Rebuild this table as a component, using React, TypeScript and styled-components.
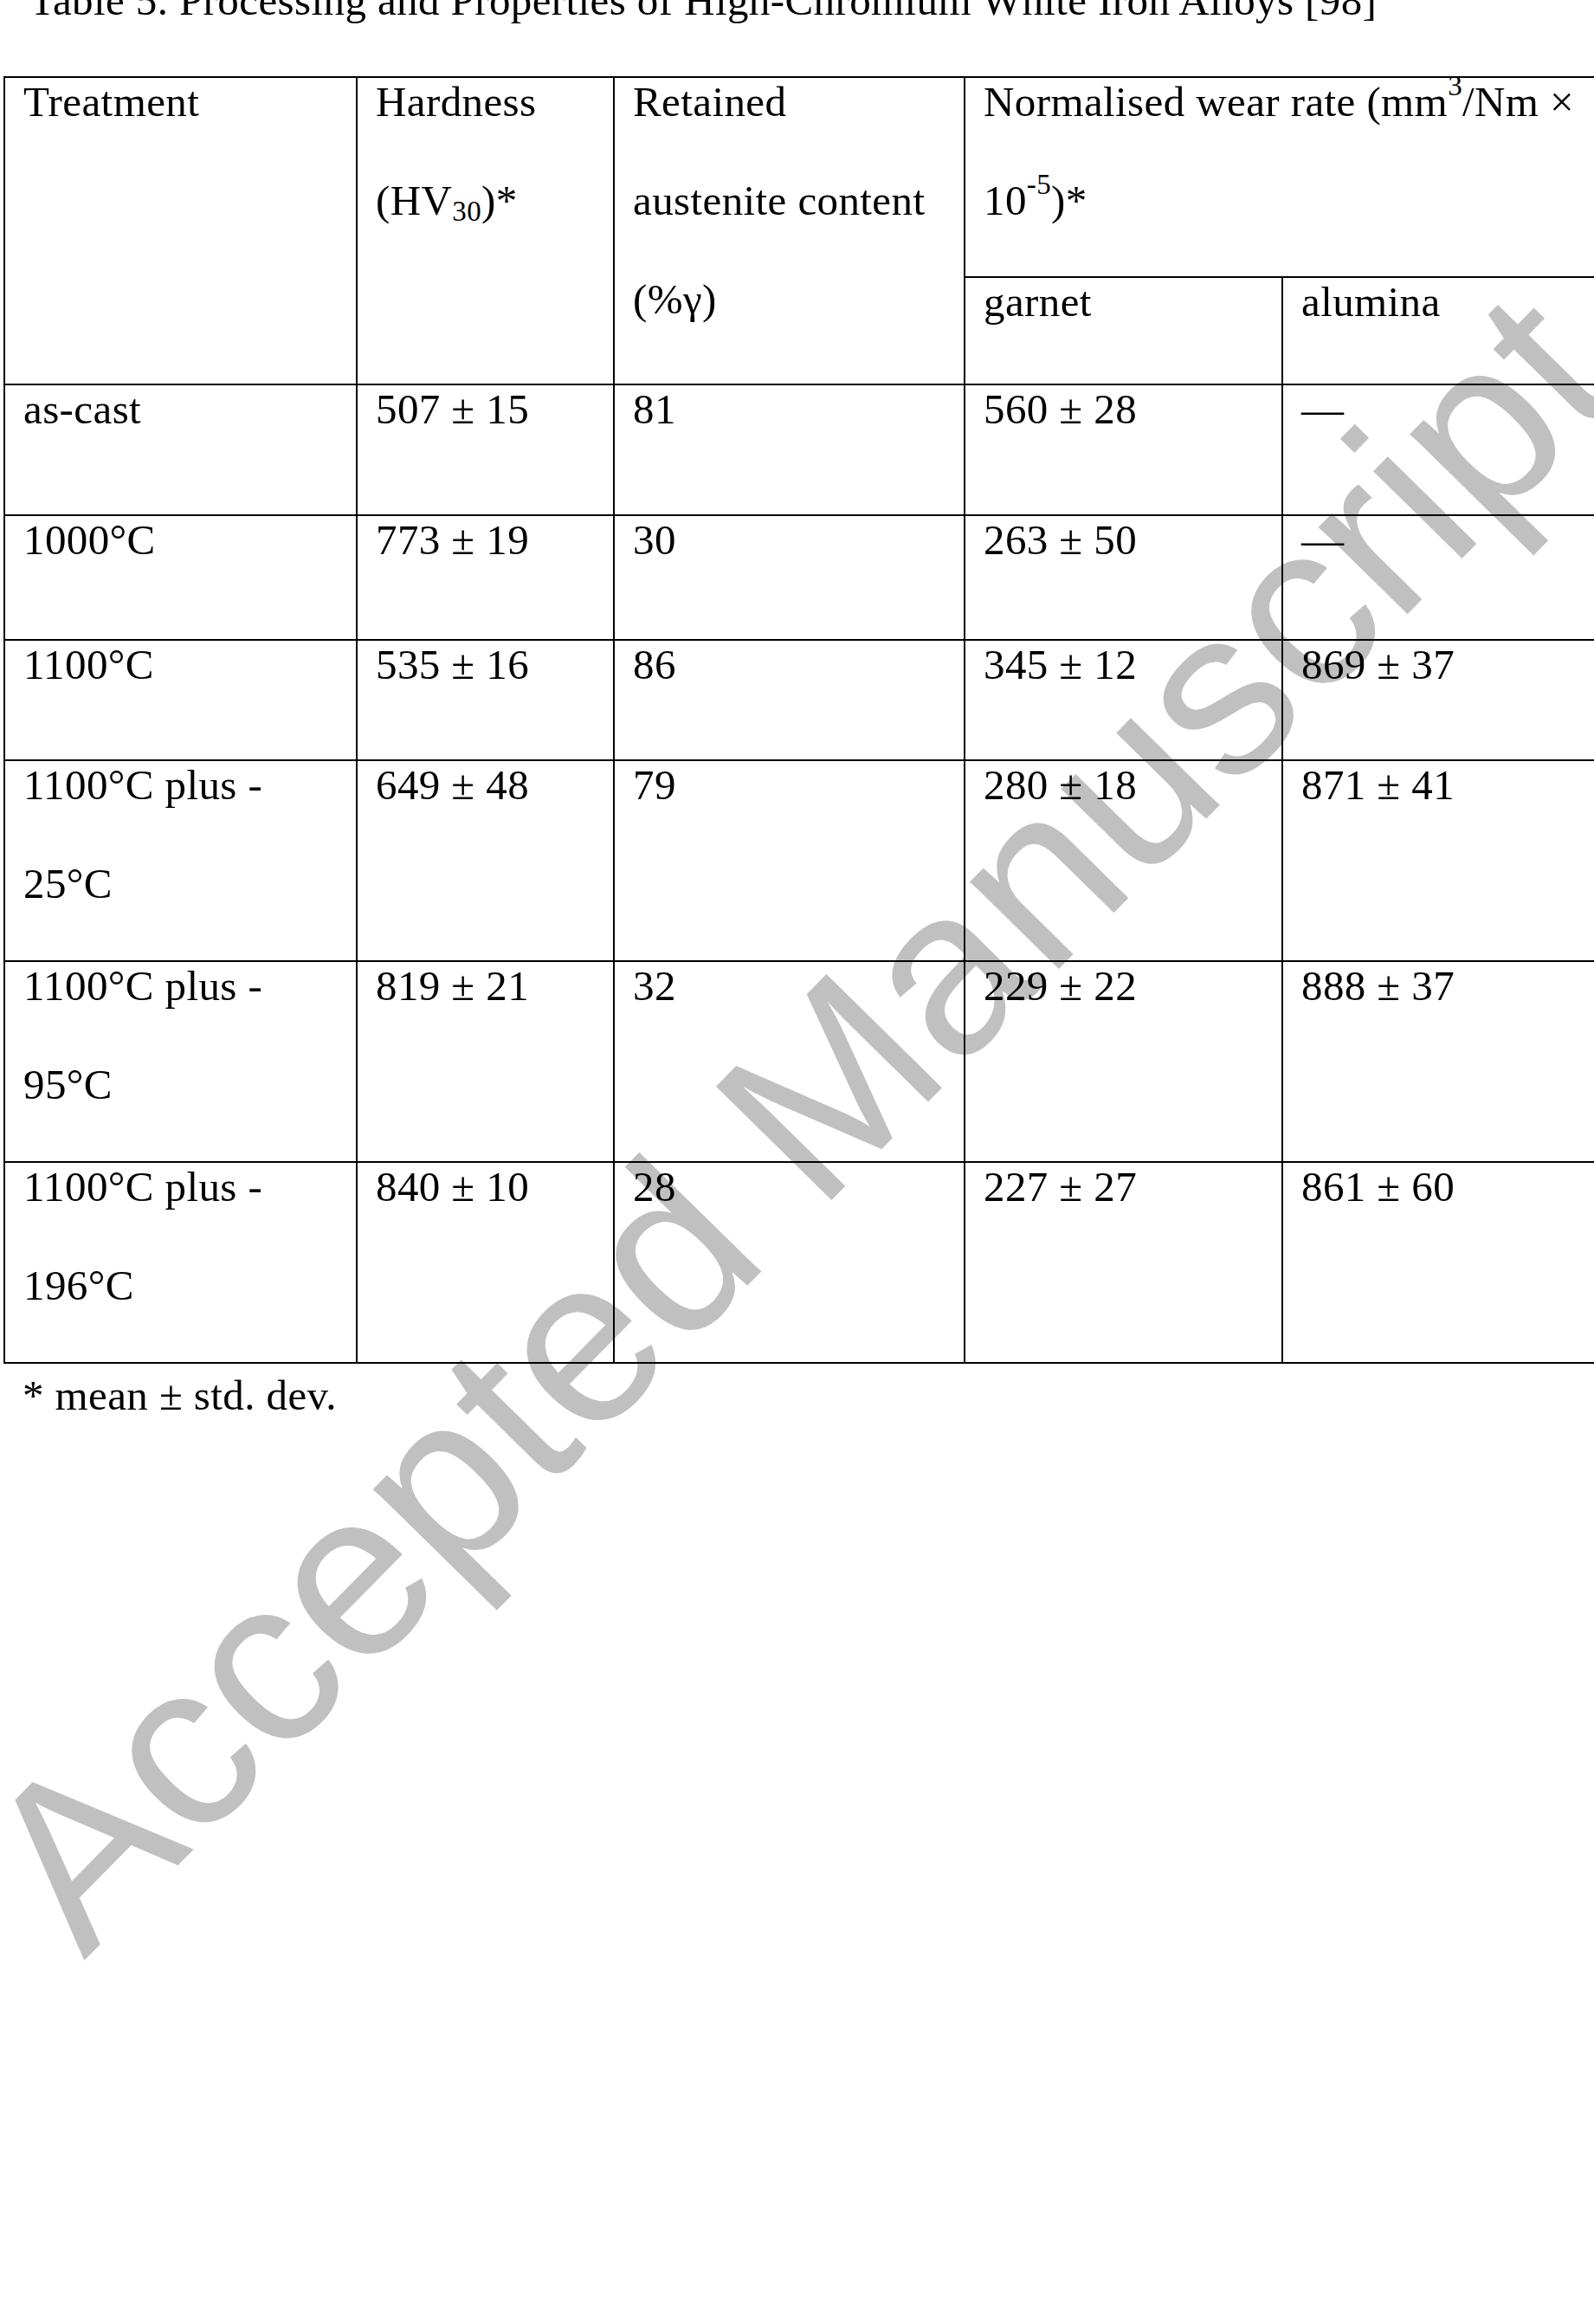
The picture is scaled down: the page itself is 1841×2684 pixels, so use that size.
import React, { ReactElement } from 'react';
import styled, { createGlobalStyle } from 'styled-components';

const GlobalStyle = createGlobalStyle`
  html, body {
    margin: 0;
    padding: 0;
    background: #ffffff;
    overflow: hidden;
  }
`;

const Page = styled.div`
  position: relative;
  width: 1841px;
  height: 2684px;
  overflow: hidden;
  background: #ffffff;
  font-family: "Liberation Serif", "Times New Roman", serif;
  font-size: 49px;
  letter-spacing: 0.4px;
  color: #000000;
`;

// big grey stamp across the page, sits under the table
const Watermark = styled.div`
  position: absolute;
  left: 920px;
  top: 1293px;
  z-index: 0;
  transform: translate(-50%, -50%) rotate(-45.5deg);
  font-family: "Liberation Sans", Arial, sans-serif;
  font-size: 272px;
  letter-spacing: 0;
  line-height: 1;
  white-space: nowrap;
  color: #c0c0c0;
  pointer-events: none;
`;

const Content = styled.div`
  position: relative;
  z-index: 1;
`;

const Caption = styled.div`
  margin-top: -27px;
  padding-left: 34px;
  line-height: 55px;
  white-space: nowrap;
`;

const Table = styled.table`
  margin: 60px 0 0 4px;
  width: 1898px;
  table-layout: fixed;
  border-collapse: separate;
  border-spacing: 0;
  border-top: 2px solid #000;
  border-left: 2px solid #000;
`;

const Row = styled.tr<{ $h: number }>`
  height: ${(p) => p.$h}px;
`;

const Cell = styled.td`
  box-sizing: border-box;
  padding: 0 0 0 21px;
  vertical-align: top;
  border-right: 2px solid #000;
  border-bottom: 2px solid #000;
  white-space: nowrap;
  overflow: visible;
`;

const Line = styled.span`
  display: block;
  line-height: 55px;

  & + & {
    margin-top: 59px;
  }
`;

const Sup = styled.span`
  position: relative;
  top: -24px;
  font-size: 33px;
  line-height: 0;
`;

const Sub = styled.span`
  position: relative;
  top: 7px;
  font-size: 33px;
  line-height: 0;
`;

const Note = styled.div`
  margin-top: 9px;
  padding-left: 26px;
  line-height: 55px;
`;

const widths = [407, 297, 405, 367, 420];

type DataRow = { treatment: string[]; hardness: string; austenite: string; garnet: string; alumina: string; h: number };

const rows: DataRow[] = [
  { treatment: ['as-cast'], hardness: '507 ± 15', austenite: '81', garnet: '560 ± 28', alumina: '—', h: 151 },
  { treatment: ['1000°C'], hardness: '773 ± 19', austenite: '30', garnet: '263 ± 50', alumina: '—', h: 144 },
  { treatment: ['1100°C'], hardness: '535 ± 16', austenite: '86', garnet: '345 ± 12', alumina: '869 ± 37', h: 139 },
  { treatment: ['1100°C plus -', '25°C'], hardness: '649 ± 48', austenite: '79', garnet: '280 ± 18', alumina: '871 ± 41', h: 232 },
  { treatment: ['1100°C plus -', '95°C'], hardness: '819 ± 21', austenite: '32', garnet: '229 ± 22', alumina: '888 ± 37', h: 232 },
  { treatment: ['1100°C plus -', '196°C'], hardness: '840 ± 10', austenite: '28', garnet: '227 ± 27', alumina: '861 ± 60', h: 232 },
];

export default function App(): ReactElement {
  return (
    <Page>
      <GlobalStyle />
      <Watermark>Accepted Manuscript</Watermark>
      <Content>
        <Caption>Table 5. Processing and Properties of High-Chromium White Iron Alloys [98]</Caption>
        <Table>
          <colgroup>
            {widths.map((w, i) => (
              <col key={i} style={{ width: w }} />
            ))}
          </colgroup>
          <tbody>
            <Row $h={231}>
              <Cell rowSpan={2}>
                <Line>Treatment</Line>
              </Cell>
              <Cell rowSpan={2}>
                <Line>Hardness</Line>
                <Line>
                  (HV<Sub>30</Sub>)*
                </Line>
              </Cell>
              <Cell rowSpan={2}>
                <Line>Retained</Line>
                <Line>austenite content</Line>
                <Line>(%γ)</Line>
              </Cell>
              <Cell colSpan={2}>
                <Line>
                  Normalised wear rate (mm<Sup>3</Sup>/Nm ×
                </Line>
                <Line>
                  10<Sup>-5</Sup>)*
                </Line>
              </Cell>
            </Row>
            <Row $h={124}>
              <Cell>
                <Line>garnet</Line>
              </Cell>
              <Cell>
                <Line>alumina</Line>
              </Cell>
            </Row>
            {rows.map((r, i) => (
              <Row key={i} $h={r.h}>
                <Cell>
                  {r.treatment.map((t, j) => (
                    <Line key={j}>{t}</Line>
                  ))}
                </Cell>
                <Cell>
                  <Line>{r.hardness}</Line>
                </Cell>
                <Cell>
                  <Line>{r.austenite}</Line>
                </Cell>
                <Cell>
                  <Line>{r.garnet}</Line>
                </Cell>
                <Cell>
                  <Line>{r.alumina}</Line>
                </Cell>
              </Row>
            ))}
          </tbody>
        </Table>
        <Note>* mean ± std. dev.</Note>
      </Content>
    </Page>
  );
}
